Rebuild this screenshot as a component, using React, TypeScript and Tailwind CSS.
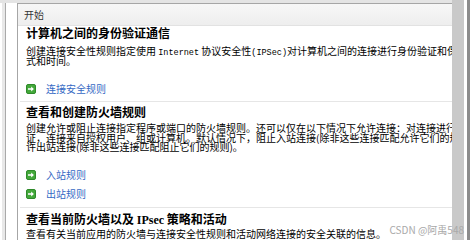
const cjk = { fontFamily: '"Noto Sans CJK SC", "Noto Sans", sans-serif' };
const mono = { fontFamily: '"Liberation Mono", "Noto Sans CJK SC", monospace' };

const GoIcon = () => (
  <svg width="10" height="10" viewBox="0 0 10 10" className="shrink-0">
    <rect x="0.5" y="0.5" width="9" height="9" rx="1.5" fill="#43a83a" stroke="#2f8a2a" />
    <path d="M2 4.2h3.2V2.4L7.9 5 5.2 7.6V5.8H2z" fill="#fff" />
  </svg>
);

const TaskLink = ({ label, className }: { label: string; className?: string }) => (
  <div className={`flex items-center gap-[10px] h-[14px] ${className ?? ""}`}>
    <GoIcon />
    <span className="text-[10px] leading-[14px] text-[#3468c4]">{label}</span>
  </div>
);

const Line = ({ children }: { children: React.ReactNode }) => (
  <div className="whitespace-nowrap leading-[9.5px] h-[9.5px]">{children}</div>
);

const Divider = ({ className }: { className?: string }) => (
  <div className={`h-px bg-[#e6e6e6] -ml-[6px] ${className ?? ""}`} />
);

export default function App() {
  return (
    <div className="w-[474px] h-[240px] overflow-hidden bg-white flex relative" style={cjk}>
      <div className="flex flex-col w-[452px]">
        <div className="h-[3px] bg-[#e4e4e4]" />
        <div className="flex flex-1 min-h-0">
          <div className="w-[2px] bg-white" />
          <div className="w-[3px] bg-[#e8e8e8]" />
          <div className="w-px bg-[#a9a9a9]" />
          <div className="w-[11px] bg-white" />
          <div className="flex-1 min-w-0 overflow-hidden flex flex-col border-l border-t border-[#a6a6a6]">
            <div className="h-[22px] shrink-0 bg-gradient-to-b from-[#f7f7f7] to-[#eeeeee] border-b border-[#e2e2e2] pl-[6px] flex items-center">
              <span className="text-[10px] text-[#333]">开始</span>
            </div>
            <div className="pl-[8px] text-black">
              <div className="text-[12px] font-bold leading-[14px] whitespace-nowrap">
                计算机之间的身份验证通信
              </div>
              <div className="mt-[6px] text-[10px]">
                <Line>
                  创建连接安全性规则指定使用 <span className="text-[8.5px]" style={mono}>Internet</span> 协议安全性<span className="text-[8.5px]" style={mono}>(IPSec)</span>对计算机之间的连接进行身份验证和保护的方
                </Line>
                <Line>式和时间。</Line>
              </div>
              <TaskLink label="连接安全规则" className="mt-[17px]" />
              <Divider className="mt-[5px]" />

              <div className="mt-[3px] text-[12px] font-bold leading-[14px] whitespace-nowrap">
                查看和创建防火墙规则
              </div>
              <div className="mt-[4px] text-[10px]">
                <Line>创建允许或阻止连接指定程序或端口的防火墙规则。还可以仅在以下情况下允许连接：对连接进行身份验</Line>
                <Line>证，连接来自授权用户、组或计算机。默认情况下，阻止入站连接(除非这些连接匹配允许它们的规则)，允</Line>
                <Line>许出站连接(除非这些连接匹配阻止它们的规则)。</Line>
              </div>
              <TaskLink label="入站规则" className="mt-[16.5px]" />
              <TaskLink label="出站规则" className="mt-[5px]" />
              <Divider className="mt-[6px]" />

              <div className="mt-[4px] text-[12px] font-bold leading-[14px] whitespace-nowrap">
                查看当前防火墙以及 <span style={{ fontFamily: '"Liberation Serif", serif' }}>IPsec</span> 策略和活动
              </div>
              <div className="mt-[2px] text-[10px]">
                <Line>查看有关当前应用的防火墙与连接安全性规则和活动网络连接的安全关联的信息。</Line>
              </div>
            </div>
          </div>
        </div>
      </div>
      <div className="w-[12px] bg-[#c9c9c9]" />
      <div className="w-[3px] bg-white" />
      <div className="w-[3px] bg-[#8c8c8c]" />
      <div className="w-[4px] bg-white" />

      <div className="absolute right-[10px] top-[223px] text-[10px] leading-[14px] text-[#a9a9a9] whitespace-nowrap">
        CSDN @阿禹548
      </div>
    </div>
  );
}
